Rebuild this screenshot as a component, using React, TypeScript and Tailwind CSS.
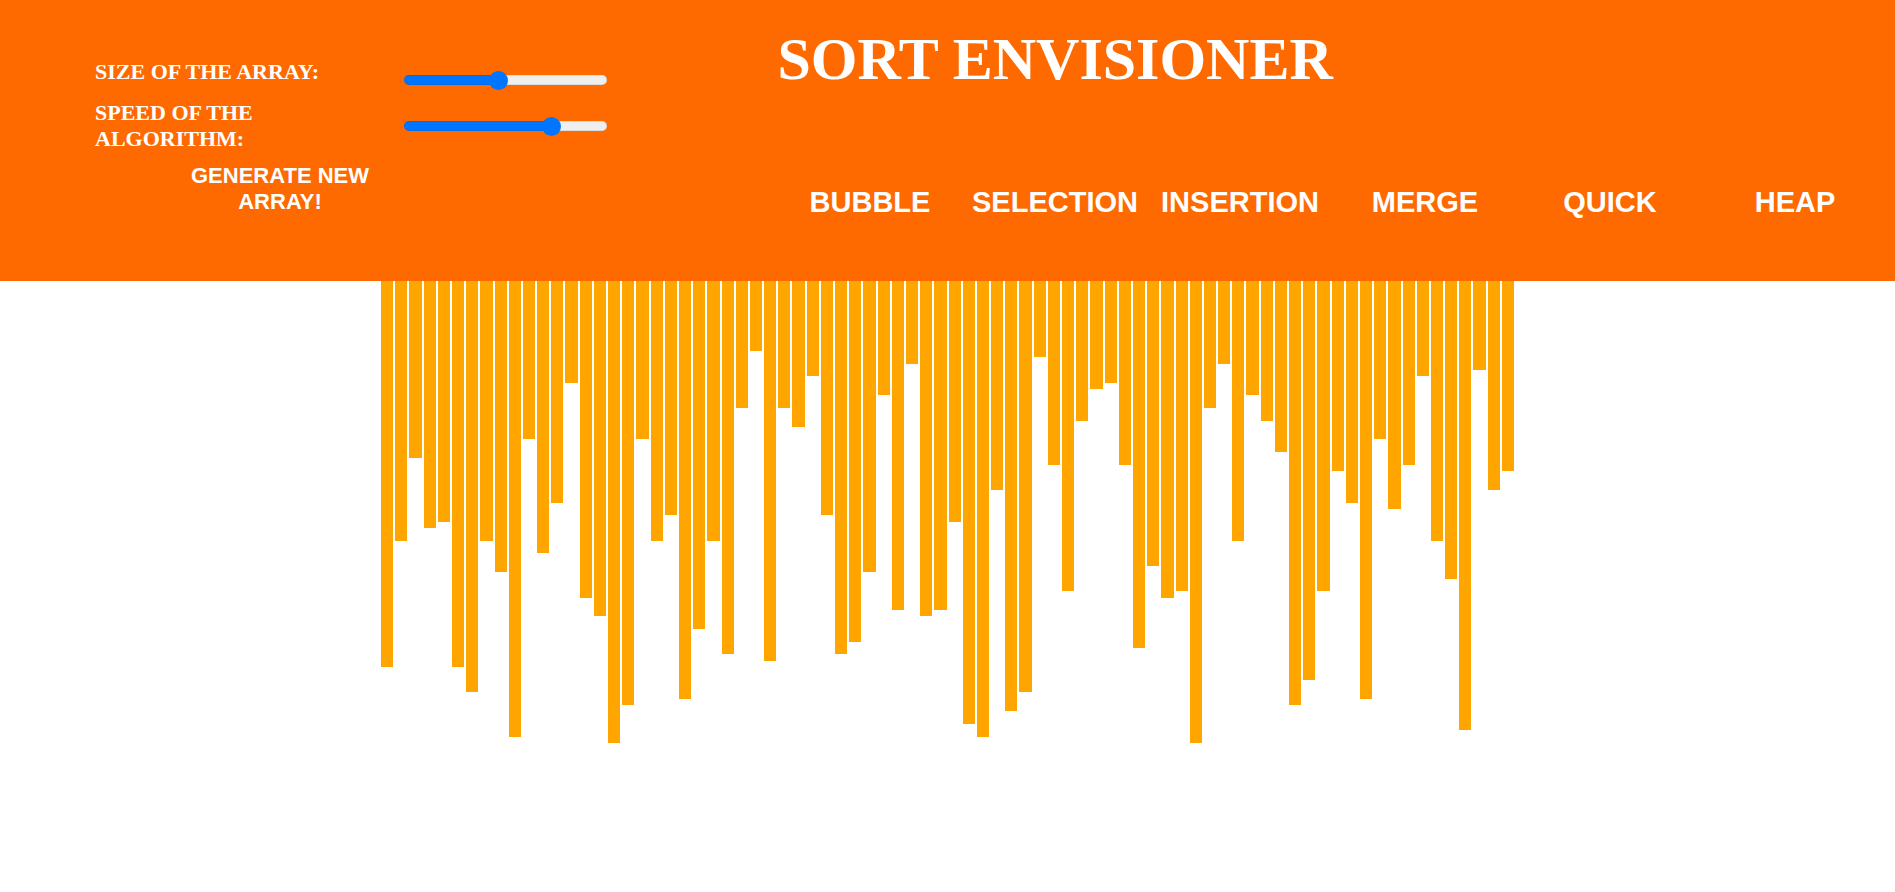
import { useState } from "react";

const heights = [
  386, 260, 177, 247, 241, 386, 411, 260, 291, 456, 158, 272, 222, 102, 317,
  335, 462, 424, 158, 260, 234, 418, 348, 260, 373, 127, 70, 380, 127, 146, 95,
  234, 373, 361, 291, 114, 329, 83, 335, 329, 241, 443, 456, 209, 430, 411, 76,
  184, 310, 140, 108, 102, 184, 367, 285, 317, 310, 462, 127, 83, 260, 114, 140,
  171, 424, 399, 310, 190, 222, 418, 158, 228, 184, 95, 260, 298, 449, 89, 209,
  190,
];

const algorithms = ["BUBBLE", "SELECTION", "INSERTION", "MERGE", "QUICK", "HEAP"];

function Slider({
  value,
  onChange,
}: {
  value: number;
  onChange: (v: number) => void;
}) {
  // fill the track up to the thumb centre (thumb 19px on a 203px track)
  const fill = ((9.5 + (value / 100) * 184) / 203) * 100;
  return (
    <input
      type="range"
      min={0}
      max={100}
      value={value}
      onChange={(e) => onChange(Number(e.target.value))}
      style={{
        background: `linear-gradient(to right, #0075ff ${fill}%, #efefef ${fill}%)`,
      }}
      className="h-[10px] w-[203px] cursor-pointer appearance-none rounded-full shadow-[inset_0_0_0_1px_rgba(0,0,0,0.08)] [&::-webkit-slider-thumb]:h-[19px] [&::-webkit-slider-thumb]:w-[19px] [&::-webkit-slider-thumb]:appearance-none [&::-webkit-slider-thumb]:rounded-full [&::-webkit-slider-thumb]:bg-[#0075ff]"
    />
  );
}

export default function App() {
  const [size, setSize] = useState(46);
  const [speed, setSpeed] = useState(75);

  return (
    <div className="min-h-[892px] bg-white font-['Liberation_Sans',Arial,sans-serif]">
      <header className="flex h-[281px] bg-[#ff6a00] text-white">
        <div className="w-[777.5px] shrink-0 pl-[95px] pt-[59px]">
          <div className="flex items-start">
            <label className="w-[309px] pr-[40px] font-['Liberation_Serif','Times_New_Roman',serif] text-[22px] leading-[26px] font-bold">
              SIZE OF THE ARRAY:
            </label>
            <div className="mt-[16px] flex">
              <Slider value={size} onChange={setSize} />
            </div>
          </div>
          <div className="mt-[15px] flex items-center">
            <label className="w-[309px] pr-[40px] font-['Liberation_Serif','Times_New_Roman',serif] text-[22px] leading-[26px] font-bold">
              SPEED OF THE ALGORITHM:
            </label>
            <div className="flex">
              <Slider value={speed} onChange={setSpeed} />
            </div>
          </div>
          <button className="mt-[11px] ml-[90px] block w-[190px] text-center text-[22px] leading-[26px] font-bold">
            GENERATE NEW ARRAY!
          </button>
        </div>

        <div className="flex-1">
          <h1 className="mt-[29px] font-['Liberation_Serif','Times_New_Roman',serif] text-[60px] leading-[60px] font-bold">
            SORT ENVISIONER
          </h1>
          <nav className="mt-[99px] flex">
            {algorithms.map((name) => (
              <button
                key={name}
                className="w-[185px] shrink-0 text-center text-[29px] leading-[29px] font-bold"
              >
                {name}
              </button>
            ))}
          </nav>
        </div>
      </header>

      <div className="flex items-start justify-center">
        {heights.map((h, i) => (
          <div
            key={i}
            className="mx-px w-[12.2px] bg-[#ffa500]"
            style={{ height: h }}
          />
        ))}
      </div>
    </div>
  );
}
